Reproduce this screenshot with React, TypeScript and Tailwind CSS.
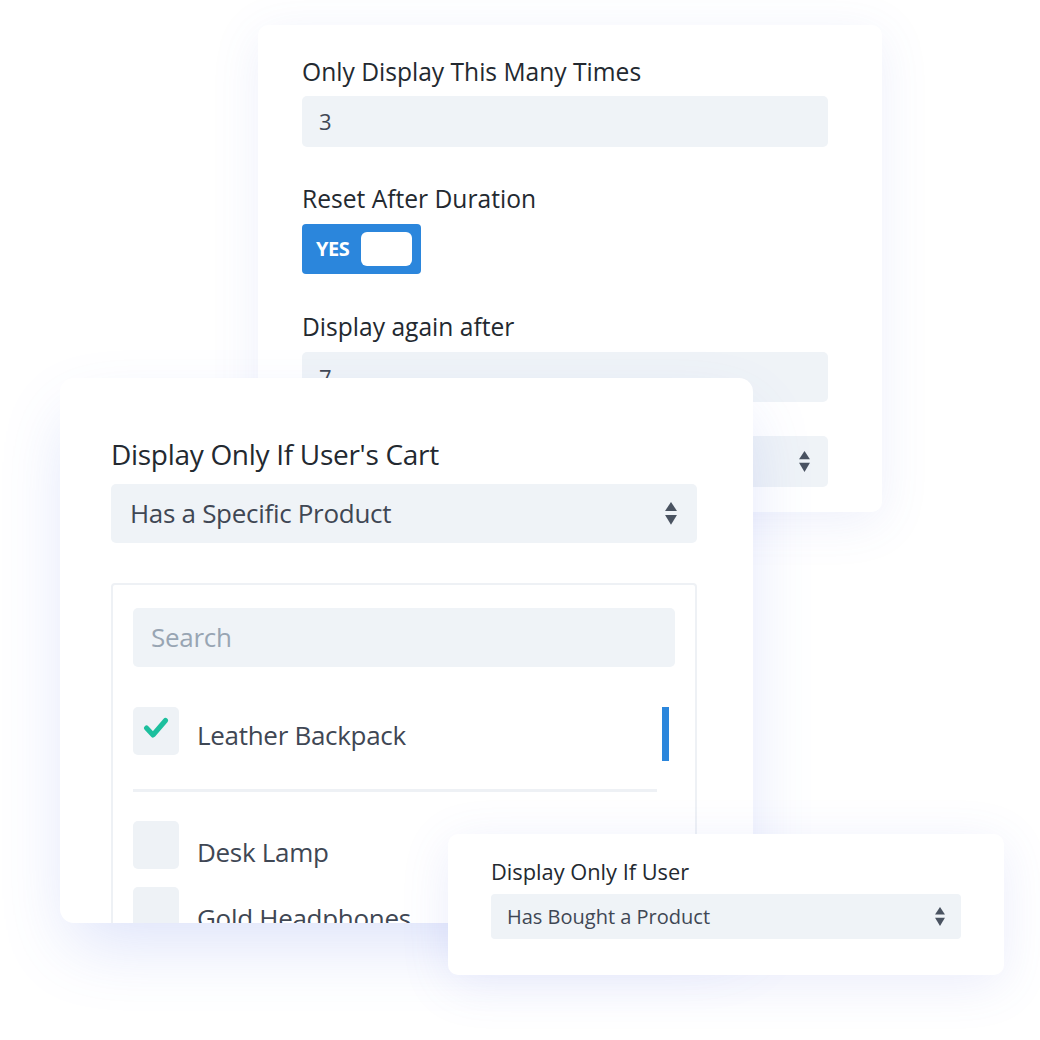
import React from 'react';

const font = { fontFamily: '"Open Sans", "Noto Sans", sans-serif' };

const Arrows: React.FC<{ size?: number }> = ({ size = 12 }) => (
  <svg width={size} height={size * 1.9} viewBox="0 0 12 23" fill="#4a5361">
    <path d="M6 0 L12 9 L0 9 Z" />
    <path d="M0 13 L12 13 L6 23 Z" />
  </svg>
);

const Checkbox: React.FC<{ checked?: boolean }> = ({ checked }) => (
  <div className="w-[46px] h-[48px] shrink-0 rounded-[5px] bg-[#eef2f6] flex items-center justify-center">
    {checked && (
      <svg width="26" height="22" viewBox="0 0 26 22" fill="none" className="-translate-y-[3px]">
        <path d="M3.5 11 L10 18 L22.5 3.5" stroke="#1cbf9d" strokeWidth="5" strokeLinecap="round" strokeLinejoin="round" />
      </svg>
    )}
  </div>
);

export default function App() {
  return (
    <div className="relative w-[1040px] h-[1040px] bg-white overflow-hidden" style={font}>
      {/* back card */}
      <div className="absolute left-[258px] top-[25px] w-[624px] h-[487px] bg-white rounded-[10px] shadow-[0_10px_50px_rgba(90,110,220,0.10)] pl-[44px] pr-[54px] pt-[32px] flex flex-col">
        <div className="shrink-0 text-[24.6px] leading-[30px] text-[#232930]">Only Display This Many Times</div>
        <div className="shrink-0 mt-[9px] h-[51px] rounded-[5px] bg-[#eff3f7] flex items-center px-[17px] text-[22px] text-[#3f4754]">3</div>

        <div className="shrink-0 mt-[37px] text-[24.6px] leading-[30px] text-[#232930]">Reset After Duration</div>
        <div className="shrink-0 mt-[10px] w-[119px] h-[50px] rounded-[4px] bg-[#2b86dc] flex items-center pl-[14px] pr-[9px] justify-between">
          <span className="text-white font-bold text-[20px] tracking-tight">YES</span>
          <div className="w-[51px] h-[34px] rounded-[6px] bg-white" />
        </div>

        <div className="shrink-0 mt-[38px] text-[24.6px] leading-[30px] text-[#232930]">Display again after</div>
        <div className="shrink-0 mt-[10px] h-[50px] rounded-[5px] bg-[#eff3f7] flex items-center px-[17px] text-[22px] text-[#3f4754]">7</div>

        <div className="shrink-0 mt-[34px] h-[51px] rounded-[5px] bg-[#eff3f7] flex items-center justify-end pr-[18px]">
          <Arrows size={11} />
        </div>
      </div>

      {/* front card */}
      <div className="absolute left-[60px] top-[378px] w-[693px] h-[545px] bg-white rounded-[14px] shadow-[0_30px_70px_-10px_rgba(80,110,230,0.20)] overflow-hidden pl-[51px] pr-[56px] pt-[58px] flex flex-col">
        <h2 className="shrink-0 text-[28px] leading-[36px] text-[#232930] tracking-[-0.3px]">Display Only If User's Cart</h2>
        <div className="shrink-0 mt-[12px] h-[59px] rounded-[5px] bg-[#eff3f7] flex items-center justify-between pl-[19px] pr-[20px]">
          <span className="text-[26px] text-[#3f4754] tracking-[-0.3px]">Has a Specific Product</span>
          <Arrows size={12} />
        </div>

        <div className="shrink-0 mt-[40px] border-2 border-[#eef1f5] rounded-[4px] px-[20px] pt-[23px] flex flex-col">
          <div className="shrink-0 h-[59px] rounded-[5px] bg-[#eff3f7] flex items-center px-[18px] text-[26px] text-[#98a5b3] tracking-[-0.3px]">Search</div>

          <div className="shrink-0 mt-[40px] flex items-start gap-[18px]">
            <Checkbox checked />
            <span className="h-[48px] leading-[48px] text-[26px] text-[#3f4754] flex-1 translate-y-[4px] tracking-[-0.3px]">Leather Backpack</span>
            <div className="w-[7px] h-[54px] bg-[#2b86dc] mr-[6px]" />
          </div>

          <div className="shrink-0 mt-[28px] h-[3px] bg-[#eef1f5] mr-[18px]" />

          <div className="shrink-0 mt-[29px] flex items-start gap-[18px]">
            <Checkbox />
            <span className="h-[48px] leading-[48px] text-[26px] text-[#3f4754] translate-y-[7px] tracking-[-0.3px]">Desk Lamp</span>
          </div>
          <div className="shrink-0 mt-[18px] flex items-start gap-[18px]">
            <Checkbox />
            <span className="h-[48px] leading-[48px] text-[26px] text-[#3f4754] translate-y-[7px] tracking-[-0.3px]">Gold Headphones</span>
          </div>
        </div>
      </div>

      {/* bottom card */}
      <div className="absolute left-[448px] top-[834px] w-[556px] h-[141px] bg-white rounded-[10px] shadow-[0_10px_50px_rgba(90,110,220,0.12)] px-[43px] pt-[24px] flex flex-col">
        <div className="shrink-0 text-[21.8px] leading-[28px] text-[#232930]">Display Only If User</div>
        <div className="shrink-0 mt-[8px] h-[45px] rounded-[4px] bg-[#eff3f7] flex items-center justify-between pl-[16px] pr-[16px]">
          <span className="text-[20px] text-[#3f4754]">Has Bought a Product</span>
          <Arrows size={10} />
        </div>
      </div>
    </div>
  );
}
